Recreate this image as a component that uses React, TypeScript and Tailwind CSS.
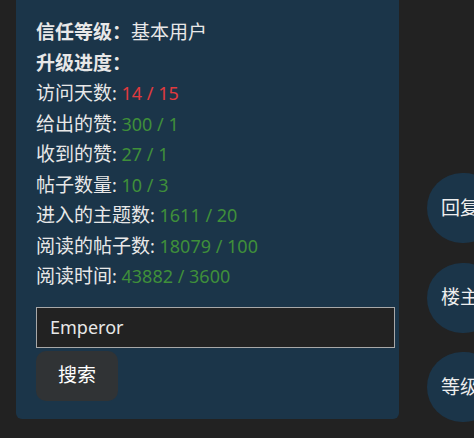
import React from 'react';

const stats = [
  { label: '访问天数', value: '14 / 15', ok: false },
  { label: '给出的赞', value: '300 / 1', ok: true },
  { label: '收到的赞', value: '27 / 1', ok: true },
  { label: '帖子数量', value: '10 / 3', ok: true },
  { label: '进入的主题数', value: '1611 / 20', ok: true },
  { label: '阅读的帖子数', value: '18079 / 100', ok: true },
  { label: '阅读时间', value: '43882 / 3600', ok: true },
];

const floatButtons = ['回复', '楼主', '等级'];

export default function App() {
  return (
    <div
      className="relative w-[474px] h-[438px] overflow-hidden bg-[#222222] text-[19px] text-[#e8e8e8]"
      style={{ fontFamily: '"Noto Sans", "Noto Sans CJK SC", sans-serif' }}
    >
      {/* Level panel */}
      <div className="ml-4 w-[383px] bg-[#1b3549] rounded-b-md pt-[17px] pb-[18px] px-5">
        <div className="leading-[30.5px]">
          <div>
            <span className="font-bold">信任等级：</span>
            <span>基本用户</span>
          </div>
          <div className="font-bold">升级进度：</div>
          {stats.map((s) => (
            <div key={s.label}>
              <span>{s.label}</span>
              <span className="text-[18px]">: </span>
              <span className={`text-[18px] ${s.ok ? 'text-[#3f8f3a]' : 'text-[#e03a3e]'}`}>{s.value}</span>
            </div>
          ))}
        </div>

        <input
          type="text"
          defaultValue="Emperor"
          className="mt-[15px] block w-[359px] h-[41px] bg-[#222222] border border-[#a8a8a8] px-[13px] text-[18px] text-[#e8e8e8] outline-none"
        />
        <button
          type="button"
          className="mt-[3px] w-[82px] h-[50px] rounded-[10px] bg-[#303335] text-[19px] text-white"
        >
          搜索
        </button>
      </div>

      {/* Floating round buttons */}
      {floatButtons.map((b, i) => (
        <div
          key={b}
          className="absolute left-[427px] w-[72px] h-[70px] rounded-full bg-[#1b3549] flex items-center pl-[14px] text-[19px] text-[#eeeeee] whitespace-nowrap"
          style={{ top: 173 + i * 89.5 }}
        >
          {b}
        </div>
      ))}
    </div>
  );
}
